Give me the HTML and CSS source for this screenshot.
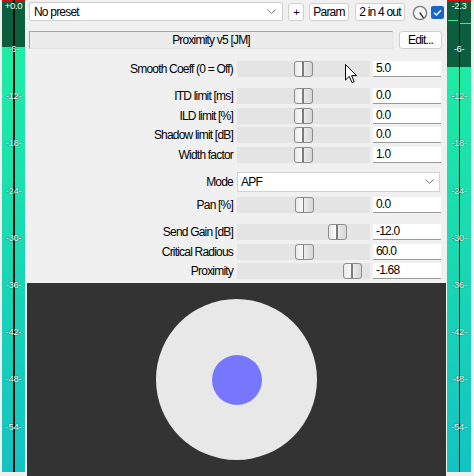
FILE: index.html
```html
<!DOCTYPE html>
<html>
<head>
<meta charset="utf-8">
<link rel="stylesheet" href="styles.css">
</head>
<body>
<div class="app">
  <div class="meter meter-left">
    <div class="meter-dark"></div>
    <div class="meter-line"></div>
    <div class="readout">+0.0</div>
    <div class="scale">
      <span class="tick">6</span><span class="tick">12</span><span class="tick">18</span><span class="tick">24</span><span class="tick">30</span><span class="tick">36</span><span class="tick">42</span><span class="tick">48</span><span class="tick">54</span>
    </div>
  </div>

  <div class="main">
    <div class="toolbar">
      <div class="preset"><span>No preset</span>
        <svg class="chev" width="9" height="6" viewBox="0 0 9 6"><polyline points="0.5,0.5 4.5,4.5 8.5,0.5" fill="none" stroke="#777" stroke-width="1"/></svg>
      </div>
      <div class="btn btn-plus">+</div>
      <div class="btn btn-param">Param</div>
      <div class="btn btn-io">2 in 4 out</div>
      <svg class="knob" width="16" height="16" viewBox="0 0 16 16">
        <circle cx="8" cy="8" r="6.6" fill="#f6f6f6" stroke="#7a7a7a" stroke-width="1.4"/>
        <line x1="8" y1="8" x2="11.2" y2="12.4" stroke="#333" stroke-width="1.4" stroke-linecap="round"/>
      </svg>
      <div class="check">
        <svg width="13" height="13" viewBox="0 0 13 13"><polyline points="3,6.8 5.4,9 10,4.2" fill="none" stroke="#fff" stroke-width="1.4"/></svg>
      </div>
    </div>

    <div class="titlerow">
      <div class="title">Proximity v5 [JM]</div>
      <div class="btn btn-edit">Edit...</div>
    </div>

    <div class="params">
      <div class="group">
        <div class="row"><div class="label">Smooth Coeff (0 = Off)</div><div class="track"><div class="thumb" style="left:57px"></div></div><div class="value">5.0</div></div>
      </div>
      <div class="group g2">
        <div class="row"><div class="label">ITD limit [ms]</div><div class="track"><div class="thumb" style="left:57px"></div></div><div class="value">0.0</div></div>
        <div class="row"><div class="label">ILD limit [%]</div><div class="track"><div class="thumb" style="left:57px"></div></div><div class="value">0.0</div></div>
        <div class="row"><div class="label">Shadow limit [dB]</div><div class="track"><div class="thumb" style="left:57px"></div></div><div class="value">0.0</div></div>
        <div class="row"><div class="label">Width factor</div><div class="track"><div class="thumb" style="left:57px"></div></div><div class="value">1.0</div></div>
      </div>
      <div class="group g3">
        <div class="row row-mode"><div class="label">Mode</div><div class="select"><span>APF</span>
          <svg class="chev" width="9" height="6" viewBox="0 0 9 6"><polyline points="0.5,0.5 4.5,4.5 8.5,0.5" fill="none" stroke="#777" stroke-width="1"/></svg></div></div>
        <div class="row row-pan"><div class="label">Pan [%]</div><div class="track"><div class="thumb" style="left:58px"></div></div><div class="value">0.0</div></div>
      </div>
      <div class="group g4">
        <div class="row"><div class="label">Send Gain [dB]</div><div class="track"><div class="thumb" style="left:91px"></div></div><div class="value">-12.0</div></div>
        <div class="row"><div class="label">Critical Radious</div><div class="track"><div class="thumb" style="left:58px"></div></div><div class="value">60.0</div></div>
        <div class="row"><div class="label">Proximity</div><div class="track"><div class="thumb" style="left:106px"></div></div><div class="value">-1.68</div></div>
      </div>
    </div>

    <div class="canvas">
      <div class="disc"><div class="dot"></div></div>
    </div>
  </div>

  <div class="meter meter-right">
    <div class="meter-dark"></div>
    <div class="meter-line"></div>
    <div class="peak peak-l"></div>
    <div class="peak peak-r"></div>
    <div class="readout">-2.3</div>
    <div class="scale">
      <span class="tick">6</span><span class="tick">12</span><span class="tick">18</span><span class="tick">24</span><span class="tick">30</span><span class="tick">36</span><span class="tick">42</span><span class="tick">48</span><span class="tick">54</span>
    </div>
  </div>

  <svg class="cursor" width="13" height="20" viewBox="0 0 13 20">
    <path d="M0.5,0.5 L0.5,16 L4.3,12.4 L7,18.6 L9.2,17.6 L6.6,11.6 L11.6,11.6 Z" fill="#fff" stroke="#000" stroke-width="1" stroke-linejoin="round"/>
  </svg>
</div>
</body>
</html>
```

FILE: styles.css
```css
* { box-sizing: border-box; }

body {
  margin: 0;
  background: #f0f0f0;
  font-family: "Liberation Sans", Arial, sans-serif;
  font-size: 12px;
  letter-spacing: -0.8px;
  color: #000;
}

.app {
  position: relative;
  display: flex;
  width: 474px;
  height: 476px;
  overflow: hidden;
}

/* ---------- meters ---------- */
.meter {
  position: relative;
  height: 472px;
  background: linear-gradient(#20f2a0, #13c3c3);
  color: #f4fff8;
  letter-spacing: -0.3px;
}
.meter-left { width: 23px; margin-left: 2px; }
.meter-right { width: 24px; margin-left: 1px; }

.meter-dark {
  background: #0c5e3e;
  border-top: 2px solid #c41414;
}
.meter-left .meter-dark { height: 47px; }
.meter-right .meter-dark { height: 67px; }

.meter-line {
  position: absolute;
  top: 0;
  bottom: 0;
  left: 11px;
  width: 1.5px;
  background: #06110c;
}
.meter-right .meter-line { left: 11.5px; }

.peak {
  position: absolute;
  height: 1px;
  background: #48e890;
}
.peak-l { left: 1px; width: 10px; top: 20px; }
.peak-r { left: 13px; width: 11px; top: 23px; }

.readout {
  position: absolute;
  top: 1px;
  left: 0;
  right: 0;
  text-align: center;
  font-size: 9.5px;
  line-height: 10px;
  text-shadow: 0 0 1px #063;
}

.scale {
  position: absolute;
  top: 44px;
  left: 0;
  right: 0;
  display: flex;
  flex-direction: column;
  align-items: center;
}
.tick {
  height: 47.2px;
  font-size: 9.5px;
  line-height: 10px;
  display: flex;
  align-items: flex-start;
  text-shadow: 0 0 1px #0a5a4a, 0 0 1px #0a5a4a;
}
.tick::before,
.tick::after {
  content: "-";
}

/* ---------- main column ---------- */
.main {
  width: 419px;
  margin-left: 2px;
  display: flex;
  flex-direction: column;
}

.toolbar {
  height: 26px;
  display: flex;
  align-items: flex-start;
  padding: 3px 0 0 2px;
}

.preset {
  width: 254px;
  height: 19px;
  background: #fff;
  border: 1px solid #cdcdcd;
  border-radius: 2px;
  display: flex;
  align-items: center;
  justify-content: space-between;
  padding: 0 6px 0 4px;
  margin-top: -1px;
}

.btn {
  height: 18px;
  background: #fdfdfd;
  border: 1px solid #d0d0d0;
  border-radius: 3px;
  display: flex;
  align-items: center;
  justify-content: center;
  white-space: nowrap;
}
.btn-plus { width: 16px; margin-left: 5px; font-size: 11px; }
.btn-param { width: 40px; margin-left: 5px; }
.btn-io { width: 50px; margin-left: 6px; }
.knob { margin-left: 7px; margin-top: 2px; }
.check {
  width: 13px;
  height: 13px;
  margin-left: 3px;
  margin-top: 3px;
  background: #1667c8;
  border-radius: 2px;
  display: flex;
}

.titlerow {
  display: flex;
  margin-top: 5px;
  padding-left: 2px;
  height: 18px;
}
.title {
  width: 364px;
  height: 18px;
  background: #ececec;
  border: 1px solid;
  border-color: #a4a4a4 #e2e2e2 #e2e2e2 #a4a4a4;
  text-align: center;
  line-height: 16px;
}
.btn-edit { width: 43px; margin-left: 6px; }

/* ---------- parameters ---------- */
.params {
  padding: 12px 0 4px 0;
}
.group { display: flex; flex-direction: column; gap: 3.5px; }
.g2 { margin-top: 11px; }
.g3 { margin-top: 9.5px; gap: 5px; }
.g4 { margin-top: 11px; }

.row {
  display: flex;
  height: 16px;
  align-items: stretch;
}
.row-mode { height: 20px; }

.label {
  width: 206px;
  text-align: right;
  line-height: 16px;
  white-space: nowrap;
}
.row-mode .label { line-height: 20px; }

.track {
  position: relative;
  width: 133px;
  margin-left: 4px;
  background: #e4e4e4;
}
.thumb {
  position: absolute;
  top: 0;
  width: 19px;
  height: 16px;
  border: 1px solid #8c8c8c;
  border-radius: 3px;
  background: linear-gradient(to right, #e9e9e9, #fbfbfb 40%, #7c7c7c 40%, #7c7c7c 50%, #ececec 50%, #d6d6d6);
}

.value {
  width: 68px;
  margin-left: 3px;
  background: #fff;
  border-bottom: 1px solid #9a9a9a;
  padding-left: 3px;
  line-height: 15px;
}

.select {
  width: 203px;
  margin-left: 4px;
  background: #fff;
  border: 1px solid #d2d2d2;
  display: flex;
  align-items: center;
  justify-content: space-between;
  padding: 0 5px 0 3px;
}

/* ---------- canvas ---------- */
.canvas {
  flex: 1;
  background: #333333;
  display: flex;
  align-items: center;
  justify-content: center;
}
.disc {
  width: 161px;
  height: 161px;
  border-radius: 50%;
  background: #e8e8e8;
  display: flex;
  align-items: center;
  justify-content: center;
}
.dot {
  width: 50px;
  height: 50px;
  border-radius: 50%;
  background: #7777fe;
}

.cursor {
  position: absolute;
  left: 345px;
  top: 64px;
}
```
